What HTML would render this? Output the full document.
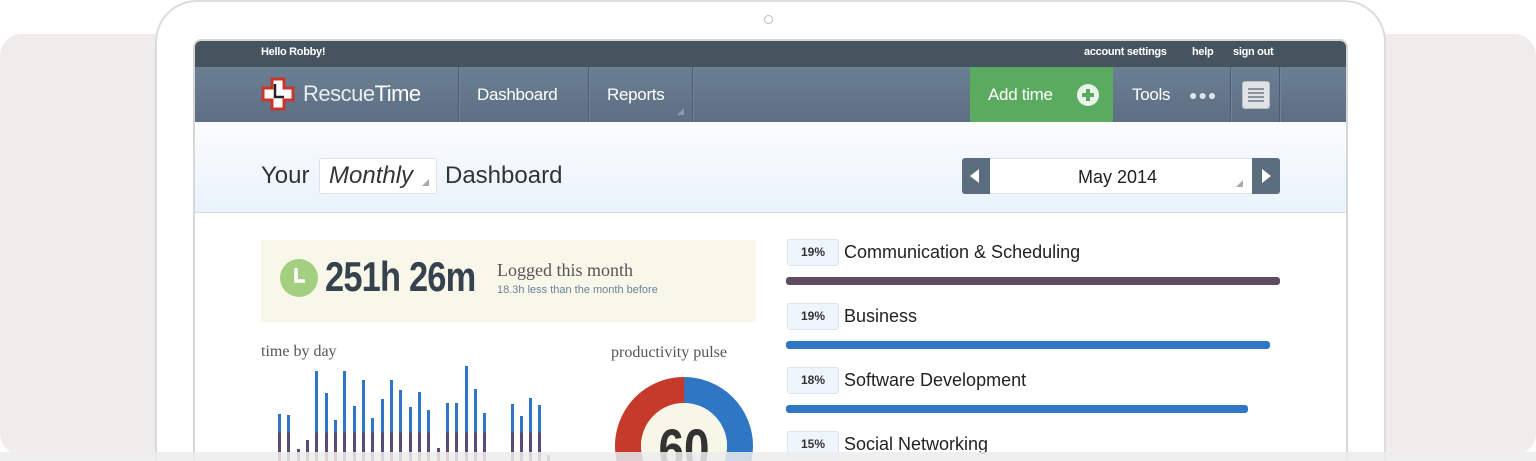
<!DOCTYPE html>
<html><head><meta charset="utf-8"><style>
*{margin:0;padding:0;box-sizing:border-box}
html,body{width:1536px;height:461px;overflow:hidden}
body{background:#fff;position:relative;font-family:"Liberation Sans",Arial,sans-serif}
.abs{position:absolute}
.panel{left:0;top:34px;width:1536px;height:421px;background:#f0ecec;border-radius:22px}
.laptop{left:155px;top:0;width:1231px;height:461px;background:#fff;border:2px solid #dcdcdc;border-bottom:none;border-radius:42px 42px 0 0}
.cam{left:764px;top:15px;width:9px;height:9px;border:1.5px solid #bbb;border-radius:50%}
.screen{left:193px;top:39px;width:1155px;height:422px;border:2px solid #d6d6d6;border-bottom:none;border-radius:8px 8px 0 0;background:#fff;overflow:hidden}
.top{left:0;top:0;width:100%;height:26px;background:#46545f;color:#fff;font-size:11px;font-weight:bold;letter-spacing:-0.3px}
.nav{left:0;top:26px;width:100%;height:55px;background:linear-gradient(#6b7f93,#5d6f82)}
.sep{top:0;width:1px;height:55px;background:#4d5d6d;box-shadow:1px 0 0 #71859a}
.navt{color:#fff;font-size:17px;top:18px;letter-spacing:-0.3px}
.hdr{left:0;top:81px;width:100%;height:91px;background:linear-gradient(#fbfcfe,#e9f3fc);border-bottom:1px solid #d6dde4}
.pct{position:absolute;left:592px;width:52px;height:27px;border:1px solid #dde3ea;background:#eef5fc;border-radius:3px;font-size:12px;font-weight:bold;color:#333;text-align:center;line-height:25px}
.cat{position:absolute;left:649px;font-size:18px;color:#222}
.hb{position:absolute;left:591px;height:8px;border-radius:3px}
</style></head><body>
<div class="abs panel"></div>
<div class="abs laptop"></div>
<div class="abs cam"></div>
<div class="abs screen">
 <div class="abs top"><span class="abs" style="left:66px;top:5px">Hello Robby!</span>
  <span class="abs" style="left:889px;top:5px">account settings</span>
  <span class="abs" style="left:997px;top:5px">help</span>
  <span class="abs" style="left:1038px;top:5px">sign out</span></div>
 <div class="abs nav">
  <svg class="abs" style="left:66px;top:10px" width="34" height="34" viewBox="0 0 34 34"><path d="M11 2h12v9h9v12h-9v9H11v-9H2V11h9z" fill="#fff" stroke="#c8352c" stroke-width="3"/><path d="M14 7v13h9" fill="none" stroke="#222" stroke-width="2.5"/></svg>
  <span class="abs" style="left:108px;top:14px;color:#e8edf2;font-size:22px;letter-spacing:-0.5px">Rescue<span style="color:#fff">Time</span></span>
  <div class="abs sep" style="left:263px"></div>
  <span class="abs navt" style="left:282px">Dashboard</span>
  <div class="abs sep" style="left:393px"></div>
  <span class="abs navt" style="left:412px">Reports</span>
  <span class="abs" style="left:482px;top:41px;width:0;height:0;border-left:7px solid transparent;border-bottom:7px solid #8a9aab"></span>
  <div class="abs sep" style="left:497px"></div>
  <div class="abs" style="left:775px;top:0;width:143px;height:55px;background:#5aab5f"></div>
  <span class="abs navt" style="left:793px">Add time</span>
  <svg class="abs" style="left:881px;top:16px" width="24" height="24" viewBox="0 0 24 24"><circle cx="12" cy="12" r="11" fill="#e9f4ea"/><path d="M12 6v12M6 12h12" stroke="#5aab5f" stroke-width="4"/></svg>
  <span class="abs navt" style="left:937px">Tools</span>
  <span class="abs" style="left:994px;top:20px;color:#dfe5ea;font-size:14px;letter-spacing:1px">●●●</span>
  <div class="abs sep" style="left:1035px"></div>
  <div class="abs" style="left:1047px;top:14px;width:28px;height:28px;background:#e0e3e6;border-radius:3px;border:1px solid #b8bec4"></div>
  <div class="abs" style="left:1053px;top:21px;width:16px;height:2px;background:#8a939c;box-shadow:0 4px 0 #8a939c,0 8px 0 #8a939c,0 12px 0 #8a939c"></div>
  <div class="abs sep" style="left:1084px"></div>
 </div>
 <div class="abs hdr">
  <span class="abs" style="left:66px;top:40px;font-size:24px;color:#333">Your</span>
  <div class="abs" style="left:124px;top:36px;width:118px;height:36px;background:#fff;border:1px solid #dfe3e7;border-radius:3px"></div>
  <span class="abs" style="left:134px;top:40px;font-size:24px;color:#333;font-style:italic">Monthly</span>
  <span class="abs" style="left:227px;top:57px;border-left:7px solid transparent;border-bottom:7px solid #aaa"></span>
  <span class="abs" style="left:250px;top:40px;font-size:24px;color:#333">Dashboard</span>
  <div class="abs" style="left:767px;top:36px;width:318px;height:36px;background:#fff;border:1px solid #dde2e6;border-radius:3px"></div>
  <div class="abs" style="left:767px;top:36px;width:28px;height:36px;background:#5b6e80;border-radius:3px 0 0 3px"></div>
  <span class="abs" style="left:775px;top:47px;border-right:9px solid #fff;border-top:7px solid transparent;border-bottom:7px solid transparent"></span>
  <div class="abs" style="left:1057px;top:36px;width:28px;height:36px;background:#5b6e80;border-radius:0 3px 3px 0"></div>
  <span class="abs" style="left:1067px;top:47px;border-left:9px solid #fff;border-top:7px solid transparent;border-bottom:7px solid transparent"></span>
  <span class="abs" style="left:883px;top:45px;font-size:18px;color:#222">May 2014</span>
  <span class="abs" style="left:1041px;top:58px;border-left:7px solid transparent;border-bottom:7px solid #aaa"></span>
 </div>
 <div class="abs" style="left:66px;top:199px;width:495px;height:82px;background:#f8f7ea"></div>
 <svg class="abs" style="left:85px;top:218px" width="38" height="38"><circle cx="19" cy="19" r="19" fill="#a5cf80"/><path d="M16 9v13h9" fill="none" stroke="#fff" stroke-width="3.5"/></svg>
 <span class="abs" style="left:130px;top:212px;font-size:42px;font-weight:bold;color:#36434f;transform:scaleX(0.82);transform-origin:left;letter-spacing:-1px">251h 26m</span>
 <span class="abs" style="left:302px;top:219px;font-family:'Liberation Serif',serif;font-size:18px;color:#555">Logged this month</span>
 <span class="abs" style="left:302px;top:243px;font-size:11px;color:#6b8399">18.3h less than the month before</span>
 <span class="abs" style="left:66px;top:302px;font-family:'Liberation Serif',serif;font-size:16px;color:#555">time by day</span>
 <span class="abs" style="left:416px;top:303px;font-family:'Liberation Serif',serif;font-size:16px;color:#555">productivity pulse</span>
 <svg class="abs" style="left:0;top:0" width="600" height="422">
  <defs>
   <linearGradient id="bg" gradientUnits="userSpaceOnUse" x1="0" y1="0" x2="0" y2="440">
    <stop offset="0" stop-color="#2f76c4"/><stop offset="0.89" stop-color="#2f76c4"/>
    <stop offset="0.89" stop-color="#5b4a74"/><stop offset="0.945" stop-color="#5b4a74"/>
    <stop offset="0.945" stop-color="#8a3f4f"/><stop offset="1" stop-color="#8a3f4f"/>
   </linearGradient>
  </defs>
  <g fill="url(#bg)">
  <rect x="83" y="373" width="3" height="80"/><rect x="92" y="374" width="3" height="80"/><rect x="102" y="408" width="3" height="40"/><rect x="111" y="399" width="3" height="50"/><rect x="120" y="330" width="3" height="120"/><rect x="130" y="352" width="3" height="100"/><rect x="139" y="379" width="3" height="80"/><rect x="148" y="330" width="3" height="120"/><rect x="158" y="365" width="3" height="90"/><rect x="167" y="339" width="3" height="110"/><rect x="176" y="377" width="3" height="80"/><rect x="186" y="358" width="3" height="90"/><rect x="195" y="339" width="3" height="110"/><rect x="204" y="349" width="3" height="100"/><rect x="214" y="366" width="3" height="90"/><rect x="223" y="351" width="3" height="100"/><rect x="232" y="369" width="3" height="80"/><rect x="242" y="407" width="3" height="40"/><rect x="251" y="362" width="3" height="90"/><rect x="260" y="362" width="3" height="90"/><rect x="270" y="325" width="3" height="120"/><rect x="279" y="348" width="3" height="100"/><rect x="288" y="372" width="3" height="80"/>
  <rect x="316" y="363" width="3" height="90"/><rect x="325" y="375" width="3" height="80"/><rect x="334" y="357" width="3" height="90"/><rect x="343" y="364" width="3" height="90"/><rect x="352" y="414" width="3" height="40"/>
  </g>
 </svg>
 <svg class="abs" style="left:418px;top:334px" width="142" height="88" viewBox="-71 -71 142 88">
  <circle r="56" fill="none" stroke="#2f76c4" stroke-width="26" stroke-dasharray="176 400" transform="rotate(-90)"/>
  <circle r="56" fill="none" stroke="#c53a2b" stroke-width="26" stroke-dasharray="96 400" transform="rotate(172)"/>
  <circle r="56" fill="none" stroke="#962f3c" stroke-width="26" stroke-dasharray="81 400" transform="rotate(90)"/>
  <circle r="43" fill="#f8f6e9"/>
  <text x="0" y="22" text-anchor="middle" font-family="Liberation Sans" font-weight="bold" font-size="56" fill="#333" transform="scale(0.82,1)">60</text>
 </svg>
 <div class="pct" style="top:198px">19%</div><div class="cat" style="top:201px">Communication &amp; Scheduling</div>
 <div class="hb" style="top:236px;width:494px;background:#5d4b61"></div>
 <div class="pct" style="top:262px">19%</div><div class="cat" style="top:265px">Business</div>
 <div class="hb" style="top:300px;width:484px;background:#2f76c4"></div>
 <div class="pct" style="top:326px">18%</div><div class="cat" style="top:329px">Software Development</div>
 <div class="hb" style="top:364px;width:462px;background:#2f76c4"></div>
 <div class="pct" style="top:390px">15%</div><div class="cat" style="top:393px">Social Networking</div>
</div>
<div class="abs" style="left:0;top:452px;width:1536px;height:9px;background:rgba(236,236,236,0.85)"></div>
</body></html>
